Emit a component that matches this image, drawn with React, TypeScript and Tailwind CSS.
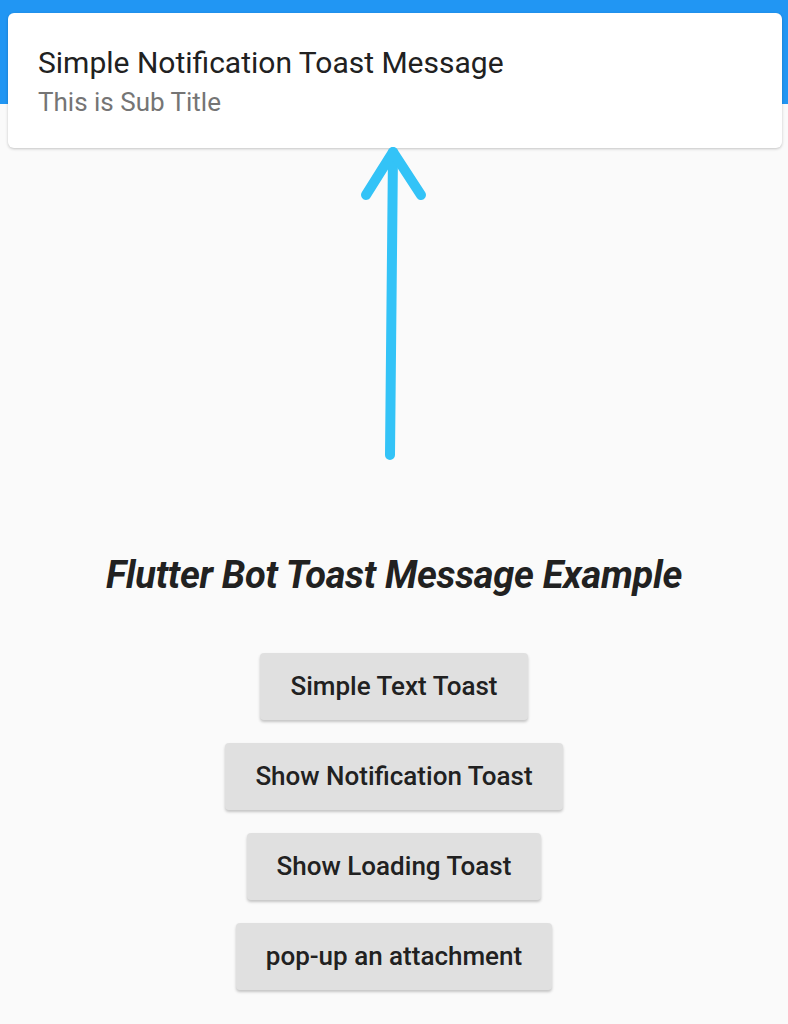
import React from "react";

const buttons = [
  "Simple Text Toast",
  "Show Notification Toast",
  "Show Loading Toast",
  "pop-up an attachment",
];

function ToastCard() {
  return (
    <div className="absolute left-[8px] right-[6px] top-[13px] h-[135px] rounded-[6px] bg-white shadow-[0_1px_3px_rgba(0,0,0,0.22)] px-[30px] pt-[30px]">
      <p className="text-[30px] leading-[40px] text-[#212121]">Simple Notification Toast Message</p>
      <p className="text-[26px] leading-[38px] text-[#757575]">This is Sub Title</p>
    </div>
  );
}

function UpArrow() {
  return (
    <svg
      className="absolute left-0 top-0 pointer-events-none"
      width="788"
      height="480"
      viewBox="0 0 788 480"
    >
      <g stroke="#33c3f7" strokeWidth="10" strokeLinecap="round" strokeLinejoin="round" fill="none">
        <path d="M390 455 L393 152" />
        <path d="M366 195 L393 152 L421 195" />
      </g>
    </svg>
  );
}

export default function App() {
  return (
    <div
      className="relative w-[788px] h-[1024px] overflow-hidden bg-[#fafafa]"
      style={{ fontFamily: "Roboto, 'Liberation Sans', sans-serif" }}
    >
      <div className="h-[104px] bg-[#2196f3]" />
      <div className="flex flex-col items-center pt-[449px]">
        <h1 className="text-[38px] leading-[44px] font-bold italic text-[#212121] tracking-[-0.3px]">
          Flutter Bot Toast Message Example
        </h1>
        <div className="flex flex-col items-center gap-[23px] mt-[56px]">
          {buttons.map((label) => (
            <button
              key={label}
              className="h-[67px] px-[30px] rounded-[4px] bg-[#e0e0e0] text-[26px] font-medium text-[#212121] shadow-[0_2px_3px_rgba(0,0,0,0.22)]"
            >
              {label}
            </button>
          ))}
        </div>
      </div>
      <ToastCard />
      <UpArrow />
    </div>
  );
}
